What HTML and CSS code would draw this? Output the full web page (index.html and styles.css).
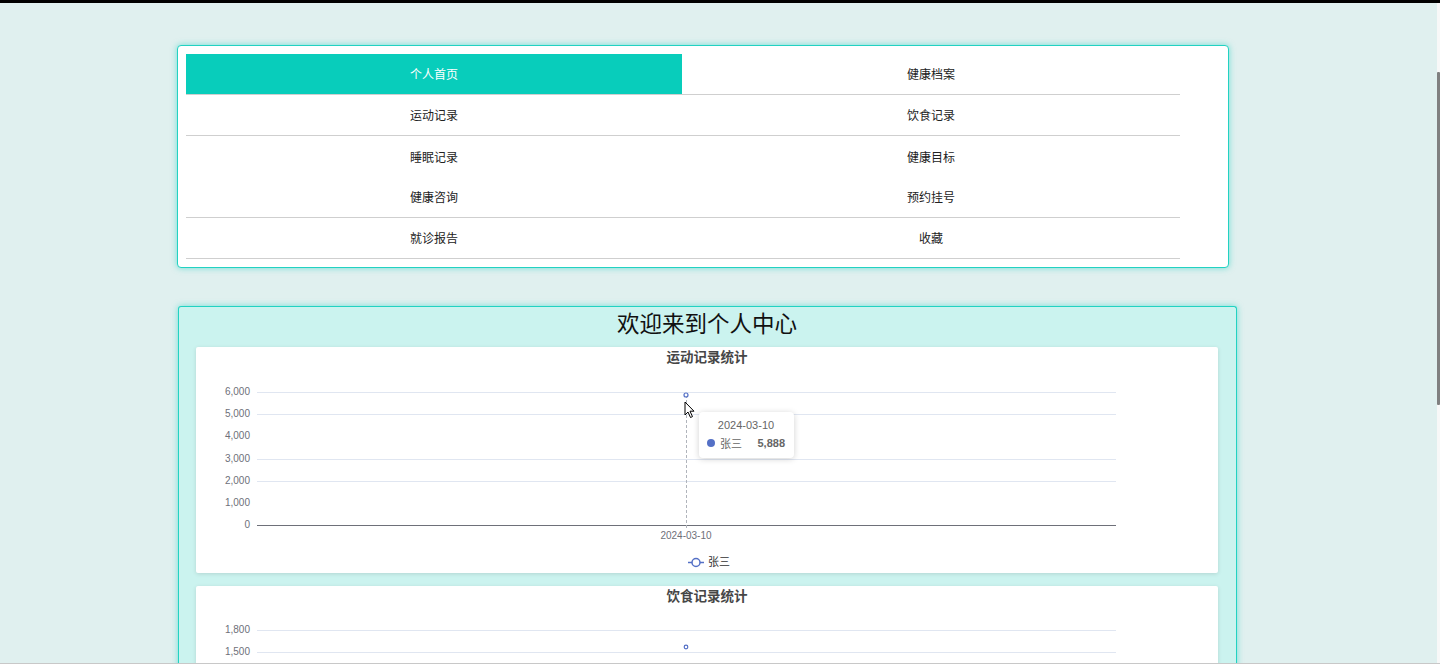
FILE: index.html
```html
<!DOCTYPE html>
<html lang="zh">
<head>
<meta charset="utf-8">
<title>个人中心</title>
<link rel="stylesheet" href="styles.css">
</head>
<body>
<div class="topbar"></div>
<div class="page">
  <nav class="menu-card">
    <ul class="menu">
      <li class="item active">个人首页</li>
      <li class="item">健康档案</li>
      <li class="item">运动记录</li>
      <li class="item">饮食记录</li>
      <li class="item noline">睡眠记录</li>
      <li class="item noline">健康目标</li>
      <li class="item">健康咨询</li>
      <li class="item">预约挂号</li>
      <li class="item">就诊报告</li>
      <li class="item">收藏</li>
    </ul>
  </nav>

  <section class="main-card">
    <h1 class="welcome">欢迎来到个人中心</h1>

    <div class="chart-card">
      <h2 class="chart-title">运动记录统计</h2>
      <svg class="chart" width="1022" height="206" viewBox="0 0 1022 206">
        <g class="grid">
          <line x1="61" y1="25.5" x2="920" y2="25.5"/>
          <line x1="61" y1="47.5" x2="920" y2="47.5"/>
          <line x1="61" y1="92.5" x2="920" y2="92.5"/>
          <line x1="61" y1="114.5" x2="920" y2="114.5"/>
        </g>
        <line class="axis" x1="61" y1="158.5" x2="920" y2="158.5"/>
        <g class="ylabels">
          <text x="54" y="25.5">6,000</text>
          <text x="54" y="47.5">5,000</text>
          <text x="54" y="69.5">4,000</text>
          <text x="54" y="92">3,000</text>
          <text x="54" y="114">2,000</text>
          <text x="54" y="136">1,000</text>
          <text x="54" y="158.5">0</text>
        </g>
        <line class="pointer" x1="490.5" y1="28" x2="490.5" y2="163"/>
        <text class="xlabel" x="490" y="169">2024-03-10</text>
        <circle class="point" cx="490" cy="28" r="2"/>
        <g class="legend">
          <line x1="492" y1="195.5" x2="508" y2="195.5"/>
          <circle cx="500" cy="195.5" r="4"/>
          <text x="512" y="196">张三</text>
        </g>
      </svg>
      <div class="tooltip">
        <div class="tip-date">2024-03-10</div>
        <div class="tip-row"><span class="tip-dot"></span><span class="tip-name">张三</span><span class="tip-val">5,888</span></div>
      </div>
      <svg class="cursor" width="12" height="18" viewBox="0 0 12 18">
        <path d="M1 1 L1 14 L4 11 L6.5 16.5 L8.5 15.6 L6 10.2 L10 10.2 Z" fill="#fff" stroke="#000" stroke-width="1" stroke-linejoin="round"/>
      </svg>
    </div>

    <div class="chart-card">
      <h2 class="chart-title">饮食记录统计</h2>
      <svg class="chart" width="1022" height="206" viewBox="0 0 1022 206">
        <g class="grid">
          <line x1="61" y1="24.5" x2="920" y2="24.5"/>
          <line x1="61" y1="46.5" x2="920" y2="46.5"/>
          <line x1="61" y1="68.5" x2="920" y2="68.5"/>
          <line x1="61" y1="90.5" x2="920" y2="90.5"/>
          <line x1="61" y1="112.5" x2="920" y2="112.5"/>
          <line x1="61" y1="134.5" x2="920" y2="134.5"/>
        </g>
        <line class="axis" x1="61" y1="156.5" x2="920" y2="156.5"/>
        <g class="ylabels">
          <text x="54" y="24.5">1,800</text>
          <text x="54" y="46.5">1,500</text>
        </g>
        <circle class="point" cx="490" cy="41" r="1.8"/>
      </svg>
    </div>
  </section>
</div>
<div class="scrollbar"><div class="thumb"></div></div>
<div class="bottomline"></div>
</body>
</html>
```

FILE: styles.css
```css
html, body {
  margin: 0;
  padding: 0;
  height: 100%;
  overflow: hidden;
}
body {
  background: #e0f0ef;
  font-family: "Noto Sans CJK SC", "Liberation Sans", sans-serif;
  color: #222;
}
.topbar {
  height: 3px;
  background: #000;
}
.page {
  padding: 42px 0 0 177px;
}
.menu-card {
  box-sizing: border-box;
  width: 1052px;
  background: #fff;
  border: 1px solid #22d2c2;
  border-radius: 4px;
  box-shadow: 0 0 6px rgba(20, 205, 190, 0.55);
  padding: 8px 48px 8px 8px;
}
.menu {
  list-style: none;
  margin: 0;
  padding: 0;
  display: grid;
  grid-template-columns: 496px 498px;
}
.item {
  height: 40px;
  line-height: 40px;
  border-bottom: 1px solid #cfcfcf;
  text-align: center;
  font-size: 12px;
  color: #222;
}
.item.noline {
  border-bottom: none;
  height: 41px;
  line-height: 41px;
}
.item.active {
  background: #08cdbb;
  color: #fff;
}
.main-card {
  margin: 38px 0 0 1px;
  width: 1059px;
  box-sizing: border-box;
  background: #cbf3ef;
  border: 1px solid #22d2c2;
  border-bottom: none;
  border-radius: 3px 3px 0 0;
  box-shadow: 0 0 6px rgba(20, 205, 190, 0.55);
  padding: 0 18px 20px 17px;
  height: 400px;
}
.welcome {
  margin: 0 0 9px;
  height: 31px;
  line-height: 31px;
  font-size: 22.5px;
  font-weight: normal;
  text-align: center;
  color: #111;
}
.chart-card {
  position: relative;
  width: 1022px;
  height: 226px;
  background: #fff;
  border-radius: 2px;
  box-shadow: 0 1px 4px rgba(0, 0, 0, 0.12);
  margin-bottom: 13px;
}
.chart-title {
  margin: 0;
  height: 20px;
  line-height: 18px;
  padding-bottom: 2px;
  box-sizing: border-box;
  font-size: 13.5px;
  font-weight: bold;
  text-align: center;
  color: #464646;
}
.chart {
  display: block;
  font-family: "Liberation Sans", "Noto Sans CJK SC", sans-serif;
}
.grid line {
  stroke: #e0e6f1;
  stroke-width: 1;
}
.axis {
  stroke: #6e7079;
  stroke-width: 1;
}
.ylabels text {
  font-size: 10px;
  fill: #6e7079;
  text-anchor: end;
  dominant-baseline: middle;
}
.xlabel {
  font-size: 10px;
  fill: #6e7079;
  text-anchor: middle;
  dominant-baseline: middle;
}
.pointer {
  stroke: #b0b4bb;
  stroke-width: 1;
  stroke-dasharray: 3 2;
}
.point {
  fill: #fff;
  stroke: #5470c6;
  stroke-width: 1.2;
}
.legend line {
  stroke: #5470c6;
  stroke-width: 1.5;
}
.legend circle {
  fill: #fff;
  stroke: #5470c6;
  stroke-width: 1.5;
}
.legend text {
  font-family: "Noto Sans CJK SC", sans-serif;
  font-size: 11px;
  fill: #333;
  dominant-baseline: middle;
}
.tooltip {
  position: absolute;
  left: 503px;
  top: 65px;
  width: 95px;
  height: 46px;
  box-sizing: border-box;
  background: #fff;
  border-radius: 4px;
  box-shadow: 0 1px 6px rgba(0, 0, 0, 0.18);
  padding: 6px 9px 0 8px;
  font-family: "Liberation Sans", "Noto Sans CJK SC", sans-serif;
  color: #666;
}
.tip-date {
  font-size: 11px;
  line-height: 14px;
  text-align: center;
}
.tip-row {
  display: flex;
  align-items: center;
  margin-top: 4px;
  font-size: 11px;
  line-height: 14px;
}
.tip-dot {
  width: 8px;
  height: 8px;
  border-radius: 50%;
  background: #5470c6;
  margin-right: 5px;
}
.tip-name {
  font-family: "Noto Sans CJK SC", sans-serif;
  flex: 1;
}
.tip-val {
  font-weight: bold;
}
.cursor {
  position: absolute;
  left: 488px;
  top: 54px;
}
.scrollbar {
  position: fixed;
  right: 0;
  top: 3px;
  bottom: 0;
  width: 3px;
  background: #f8f8f8;
}
.thumb {
  margin-top: 69px;
  height: 333px;
  background: #808080;
  border-radius: 1px;
}
.bottomline {
  position: fixed;
  left: 0;
  right: 0;
  bottom: 0;
  height: 1px;
  background: #c8c8c8;
}
```
